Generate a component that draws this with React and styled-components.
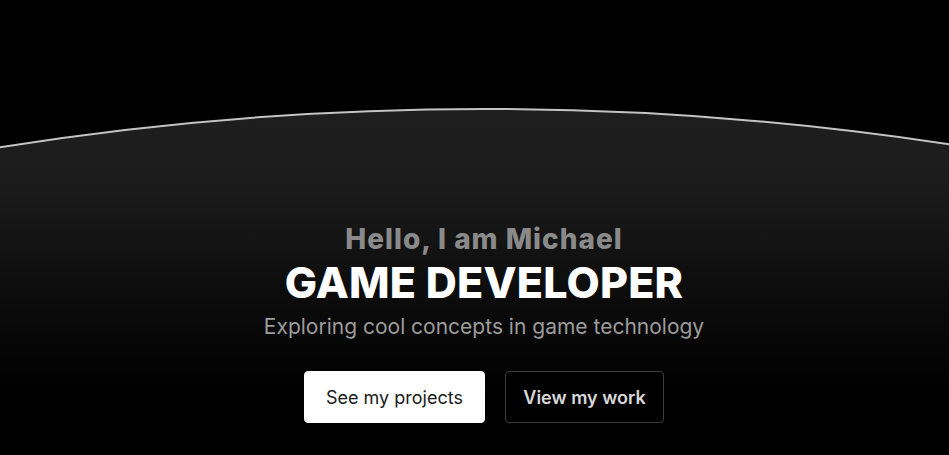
import React from 'react';
import styled, { createGlobalStyle } from 'styled-components';

const GlobalStyle = createGlobalStyle`
  html, body {
    margin: 0;
    padding: 0;
    background: #000;
  }
  body {
    font-family: Inter, "Noto Sans", sans-serif;
  }
`;

const Hero = styled.section`
  position: relative;
  height: 455px;
  overflow: hidden;
  background: #000;
  display: flex;
  flex-direction: column;
  align-items: center;
  padding: 222px 0 0 19px;
  box-sizing: border-box;

  &::before {
    content: '';
    position: absolute;
    top: 108px;
    left: calc(50% + 9.5px - 3085px);
    width: 6170px;
    height: 6170px;
    border-radius: 50%;
    border: 2px solid #c4c4c4;
    box-sizing: border-box;
    background: linear-gradient(180deg, #1e1e1e 0px, #1c1c1c 70px, #0a0a0a 200px, #000 290px);
  }
`;

const Content = styled.div`
  position: relative;
  display: flex;
  flex-direction: column;
  align-items: center;
`;

const Greeting = styled.h2`
  margin: 0;
  font-family: Inter, sans-serif;
  font-weight: 800;
  font-size: 28px;
  line-height: 34px;
  color: #8a8a8a;
  letter-spacing: 1px;
`;

const Title = styled.h1`
  margin: 0;
  font-family: Inter, sans-serif;
  font-weight: 800;
  font-size: 43px;
  line-height: 52px;
  color: #fff;
  letter-spacing: 0.2px;
`;

const Subtitle = styled.p`
  margin: 4px 0 0;
  font-size: 21px;
  line-height: 30px;
  color: #9c9c9c;
`;

const Actions = styled.div`
  display: flex;
  gap: 20px;
  margin-top: 29px;
`;

const Button = styled.button`
  height: 52px;
  box-sizing: border-box;
  padding: 0;
  border-radius: 4px;
  white-space: nowrap;
  font-family: Inter, sans-serif;
  font-size: 18px;
  cursor: pointer;
  background: ${(p) => (p.$primary ? '#fff' : '#000')};
  color: ${(p) => (p.$primary ? '#1a1a1a' : '#d8d8d8')};
  border: 1px solid ${(p) => (p.$primary ? '#fff' : '#3c3c3c')};
  font-weight: ${(p) => (p.$primary ? 400 : 600)};
  width: ${(p) => p.$width}px;
`;

export default function App() {
  return (
    <>
      <GlobalStyle />
      <Hero>
        <Content>
          <Greeting>Hello, I am Michael</Greeting>
          <Title>GAME DEVELOPER</Title>
          <Subtitle>Exploring cool concepts in game technology</Subtitle>
          <Actions>
            <Button $primary $width={181}>See my projects</Button>
            <Button $width={159}>View my work</Button>
          </Actions>
        </Content>
      </Hero>
    </>
  );
}
